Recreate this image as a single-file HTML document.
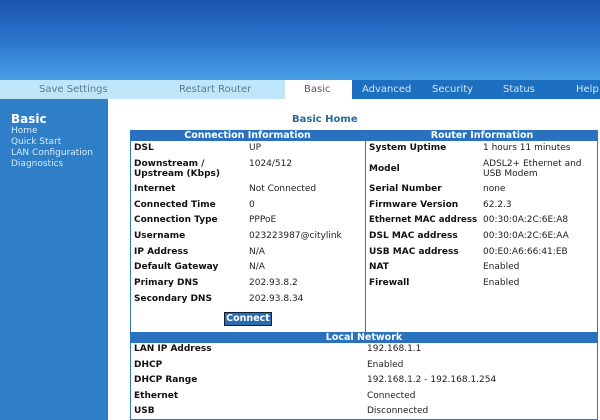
<!DOCTYPE html><html><head><style>
*{margin:0;padding:0;box-sizing:border-box}
body{width:600px;height:420px;overflow:hidden;background:#fff;font-family:"DejaVu Sans",Verdana,sans-serif;font-size:9px;color:#222;position:relative}
.a{position:absolute;white-space:nowrap}
.b{font-weight:bold;color:#111}
.h{position:absolute;background:#2a72c0;color:#fff;font-weight:bold;text-align:center;height:11px;line-height:11px;font-size:9.5px}
.nav{position:absolute;top:80px;height:19px;line-height:19px;font-size:10px}
</style></head><body>
<div class="a" style="left:0;top:0;width:600px;height:80px;background:linear-gradient(#1b55ae,#2a74cc 50%,#4aa0e6)"></div>
<div class="a" style="left:0;top:80px;width:285px;height:19px;background:#bfe6f8"></div>
<div class="a" style="left:285px;top:80px;width:67px;height:19px;background:#fff"></div>
<div class="a" style="left:352px;top:80px;width:248px;height:19px;background:#1d70c0"></div>
<div class="nav" style="left:39px;color:#5a7a90">Save Settings</div>
<div class="nav" style="left:179px;color:#5a7a90">Restart Router</div>
<div class="nav" style="left:304px;color:#557">Basic</div>
<div class="nav" style="left:362px;color:#cfe6fb">Advanced</div>
<div class="nav" style="left:432px;color:#cfe6fb">Security</div>
<div class="nav" style="left:503px;color:#cfe6fb">Status</div>
<div class="nav" style="left:576px;color:#cfe6fb">Help</div>
<div class="a" style="left:0;top:99px;width:108px;height:321px;background:#2f7ec8"></div>
<div class="a" style="left:11px;top:112px;color:#fff;font-weight:bold;font-size:12px">Basic</div>
<div class="a" style="left:11px;top:126px;color:#d6ebfb;line-height:11px">Home<br>Quick Start<br>LAN Configuration<br>Diagnostics</div>
<div class="a" style="left:292px;top:114px;color:#2a6a9a;font-weight:bold;font-size:10px">Basic Home</div>
<div class="a" style="left:130px;top:130px;width:468px;height:290px;border:1px solid #3a78b8"></div>
<div class="a" style="left:365px;top:130px;width:1px;height:202px;background:#3a78b8"></div>
<div class="h" style="left:130px;top:130px;width:235px">Connection Information</div>
<div class="h" style="left:366px;top:130px;width:232px">Router Information</div>
<div class="h" style="left:130px;top:332px;width:468px">Local Network</div>
<div class="a b" style="left:134px;top:143px;line-height:10px">DSL</div><div class="a" style="left:249px;top:143px">UP</div>
<div class="a b" style="left:134px;top:159px;line-height:10px">Downstream /<br>Upstream (Kbps)</div><div class="a" style="left:249px;top:159px">1024/512</div>
<div class="a b" style="left:134px;top:184px">Internet</div><div class="a" style="left:249px;top:184px">Not Connected</div>
<div class="a b" style="left:134px;top:200px">Connected Time</div><div class="a" style="left:249px;top:200px">0</div>
<div class="a b" style="left:134px;top:215px">Connection Type</div><div class="a" style="left:249px;top:215px">PPPoE</div>
<div class="a b" style="left:134px;top:231px">Username</div><div class="a" style="left:249px;top:231px">023223987@citylink</div>
<div class="a b" style="left:134px;top:247px">IP Address</div><div class="a" style="left:249px;top:247px">N/A</div>
<div class="a b" style="left:134px;top:262px">Default Gateway</div><div class="a" style="left:249px;top:262px">N/A</div>
<div class="a b" style="left:134px;top:278px">Primary DNS</div><div class="a" style="left:249px;top:278px">202.93.8.2</div>
<div class="a b" style="left:134px;top:294px">Secondary DNS</div><div class="a" style="left:249px;top:294px">202.93.8.34</div>
<div class="a" style="left:224px;top:312px;width:48px;height:14px;background:#2a6cb0;border:1px solid #123;color:#fff;font-weight:bold;font-size:9.5px;text-align:center;line-height:12px">Connect</div>
<div class="a b" style="left:369px;top:143px">System Uptime</div><div class="a" style="left:483px;top:143px">1 hours 11 minutes</div>
<div class="a b" style="left:369px;top:164px">Model</div><div class="a" style="left:483px;top:159px;line-height:10px">ADSL2+ Ethernet and<br>USB Modem</div>
<div class="a b" style="left:369px;top:184px">Serial Number</div><div class="a" style="left:483px;top:184px">none</div>
<div class="a b" style="left:369px;top:200px">Firmware Version</div><div class="a" style="left:483px;top:200px">62.2.3</div>
<div class="a b" style="left:369px;top:215px;font-size:8.6px">Ethernet MAC address</div><div class="a" style="left:483px;top:215px">00:30:0A:2C:6E:A8</div>
<div class="a b" style="left:369px;top:231px">DSL MAC address</div><div class="a" style="left:483px;top:231px">00:30:0A:2C:6E:AA</div>
<div class="a b" style="left:369px;top:247px">USB MAC address</div><div class="a" style="left:483px;top:247px">00:E0:A6:66:41:EB</div>
<div class="a b" style="left:369px;top:262px">NAT</div><div class="a" style="left:483px;top:262px">Enabled</div>
<div class="a b" style="left:369px;top:278px">Firewall</div><div class="a" style="left:483px;top:278px">Enabled</div>
<div class="a b" style="left:134px;top:344px">LAN IP Address</div><div class="a" style="left:367px;top:344px">192.168.1.1</div>
<div class="a b" style="left:134px;top:360px">DHCP</div><div class="a" style="left:367px;top:360px">Enabled</div>
<div class="a b" style="left:134px;top:375px">DHCP Range</div><div class="a" style="left:367px;top:375px">192.168.1.2 - 192.168.1.254</div>
<div class="a b" style="left:134px;top:391px">Ethernet</div><div class="a" style="left:367px;top:391px">Connected</div>
<div class="a b" style="left:134px;top:406px">USB</div><div class="a" style="left:367px;top:406px">Disconnected</div>
</body></html>
